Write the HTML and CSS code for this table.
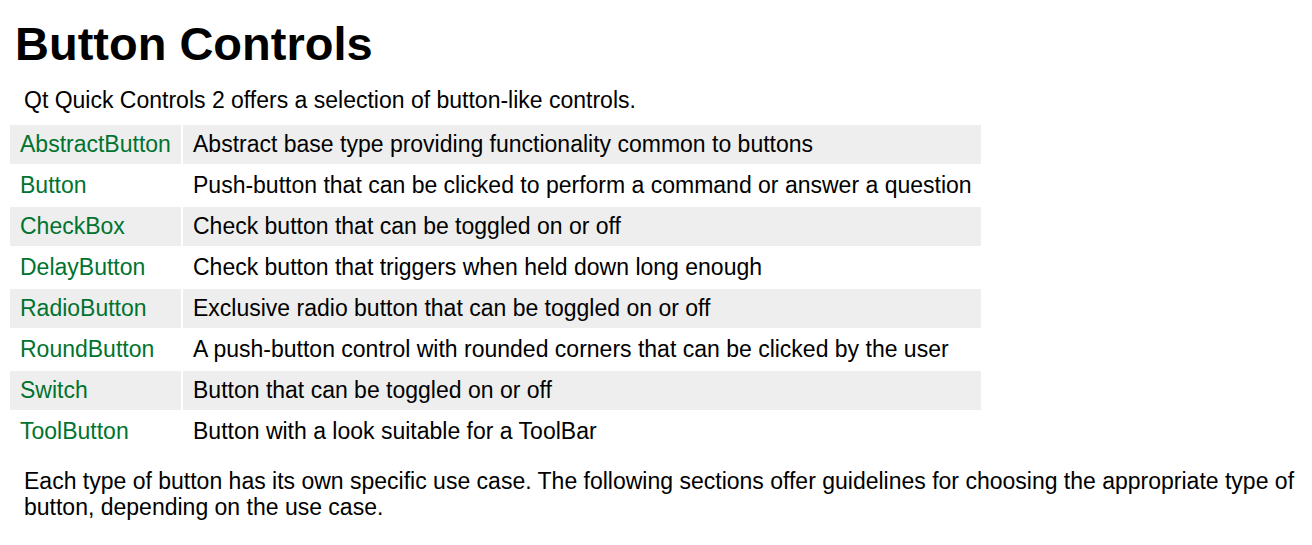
FILE: index.html
```html
<!DOCTYPE html>
<html>
<head>
<meta charset="utf-8">
<title>Button Controls</title>
<link rel="stylesheet" href="styles.css">
</head>
<body>
<h1 class="title">Button Controls</h1>
<p class="intro">Qt Quick Controls 2 offers a selection of button-like controls.</p>
<table class="controls">
  <tr class="odd"><td class="name"><a href="#">AbstractButton</a></td><td class="desc">Abstract base type providing functionality common to buttons</td></tr>
  <tr class="even"><td class="name"><a href="#">Button</a></td><td class="desc">Push-button that can be clicked to perform a command or answer a question</td></tr>
  <tr class="odd"><td class="name"><a href="#">CheckBox</a></td><td class="desc">Check button that can be toggled on or off</td></tr>
  <tr class="even"><td class="name"><a href="#">DelayButton</a></td><td class="desc">Check button that triggers when held down long enough</td></tr>
  <tr class="odd"><td class="name"><a href="#">RadioButton</a></td><td class="desc">Exclusive radio button that can be toggled on or off</td></tr>
  <tr class="even"><td class="name"><a href="#">RoundButton</a></td><td class="desc">A push-button control with rounded corners that can be clicked by the user</td></tr>
  <tr class="odd"><td class="name"><a href="#">Switch</a></td><td class="desc">Button that can be toggled on or off</td></tr>
  <tr class="even"><td class="name"><a href="#">ToolButton</a></td><td class="desc">Button with a look suitable for a ToolBar</td></tr>
</table>
<p class="outro">Each type of button has its own specific use case. The following sections offer guidelines for choosing the appropriate type of button, depending on the use case.</p>
</body>
</html>
```
FILE: styles.css
```css
html, body {
  background: #ffffff;
}
body {
  margin: 8px;
  font-family: "Liberation Sans", Arial, sans-serif;
  font-size: 23px;
  color: #000000;
}
.title {
  font-size: 47px;
  font-weight: bold;
  line-height: 54px;
  margin: 9px 0 0 7px;
}
.intro {
  line-height: 26px;
  margin: 16px 0 0 16px;
}
.controls {
  border-collapse: separate;
  border-spacing: 2px;
  table-layout: fixed;
  width: 975px;
  margin-top: 10px;
}
.controls td {
  padding: 7px 10px;
  line-height: 25px;
  height: 25px;
  white-space: nowrap;
}
.controls .name {
  width: 151px;
}
.controls .odd td {
  background: #eeeeee;
}
.controls a {
  color: #00732f;
  text-decoration: none;
}
.outro {
  line-height: 26px;
  margin: 15px 0 0 16px;
}
```
